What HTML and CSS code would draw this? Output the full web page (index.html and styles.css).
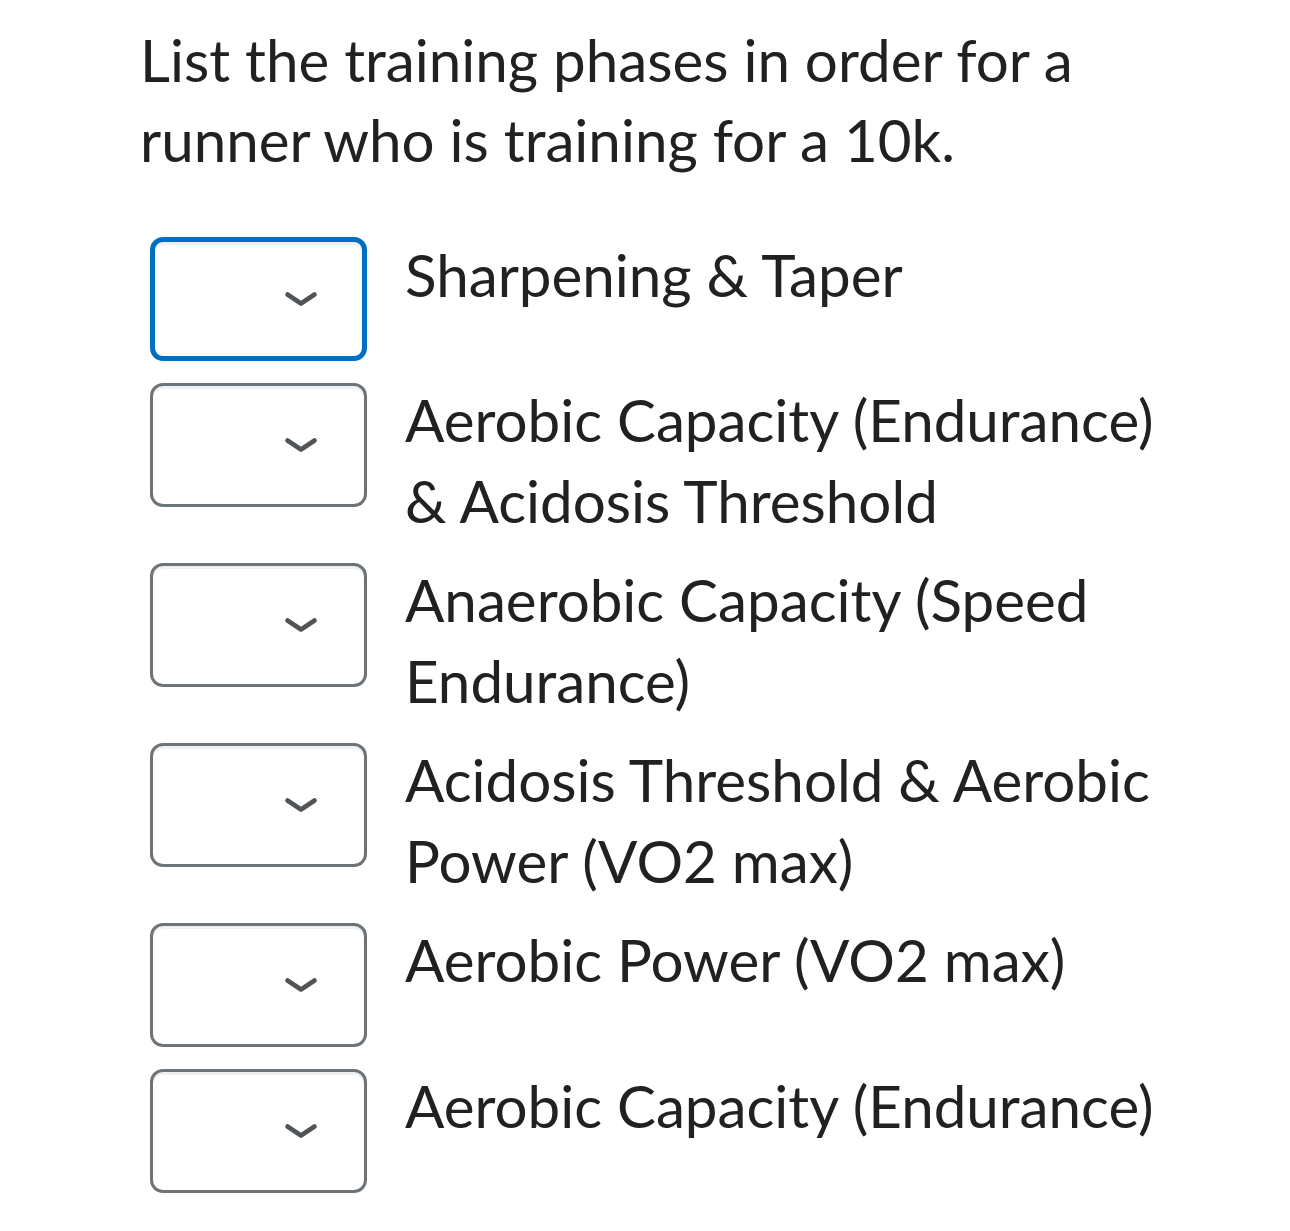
FILE: index.html
```html
<!DOCTYPE html>
<html lang="en">
<head>
<meta charset="utf-8">
<title>Ordering question</title>
<link rel="stylesheet" href="styles.css">
</head>
<body>
<main class="question">
  <p class="prompt">List the training phases in order for a runner who is training for a 10k.</p>
  <div class="items">
    <div class="item">
      <div class="select focused"><svg class="chev" viewBox="0 0 32 14"><path d="M2.5 2.5 L16 11.5 L29.5 2.5"/></svg></div>
      <div class="label">Sharpening &amp; Taper</div>
    </div>
    <div class="item">
      <div class="select"><svg class="chev" viewBox="0 0 32 14"><path d="M2.5 2.5 L16 11.5 L29.5 2.5"/></svg></div>
      <div class="label">Aerobic Capacity (Endurance) &amp; Acidosis Threshold</div>
    </div>
    <div class="item">
      <div class="select"><svg class="chev" viewBox="0 0 32 14"><path d="M2.5 2.5 L16 11.5 L29.5 2.5"/></svg></div>
      <div class="label">Anaerobic Capacity (Speed Endurance)</div>
    </div>
    <div class="item">
      <div class="select"><svg class="chev" viewBox="0 0 32 14"><path d="M2.5 2.5 L16 11.5 L29.5 2.5"/></svg></div>
      <div class="label">Acidosis Threshold &amp; Aerobic Power (VO2 max)</div>
    </div>
    <div class="item">
      <div class="select"><svg class="chev" viewBox="0 0 32 14"><path d="M2.5 2.5 L16 11.5 L29.5 2.5"/></svg></div>
      <div class="label">Aerobic Power (VO2 max)</div>
    </div>
    <div class="item">
      <div class="select"><svg class="chev" viewBox="0 0 32 14"><path d="M2.5 2.5 L16 11.5 L29.5 2.5"/></svg></div>
      <div class="label">Aerobic Capacity (Endurance)</div>
    </div>
  </div>
</main>
</body>
</html>
```
FILE: styles.css
```css
* { box-sizing: border-box; }
html, body { margin: 0; padding: 0; background: #ffffff; }
body {
  font-family: Lato, "Noto Sans", sans-serif;
  color: #202122;
  font-size: 58.3px;
  line-height: 81px;
}
.question {
  padding: 19px 0 0 140px;
  width: 1200px;
}
.prompt {
  margin: 0;
  width: 960px;
  line-height: 80px;
}
.items {
  display: flex;
  flex-direction: column;
  gap: 18px;
  margin-top: 55px;
}
.item {
  display: flex;
  align-items: flex-start;
}
.select {
  flex: none;
  margin: 4px 0 0 10px;
  width: 217px;
  height: 124px;
  border: 3px solid #6e7377;
  border-radius: 13px;
  background: #fff;
  box-shadow: inset 0 3px 0 #eef1f3;
  display: flex;
  align-items: center;
  justify-content: flex-end;
  padding-right: 47px;
}
.select.focused {
  margin-top: 3px;
  height: 124px;
  border: 5px solid #006fbf;
  padding-right: 45px;
}
.chev {
  flex: none;
  display: block;
  width: 32px;
  height: 14px;
  overflow: visible;
}
.chev path {
  fill: none;
  stroke: #515457;
  stroke-width: 4.6;
  stroke-linecap: round;
  stroke-linejoin: round;
}
.label {
  margin-left: 38px;
  width: 770px;
}
```
